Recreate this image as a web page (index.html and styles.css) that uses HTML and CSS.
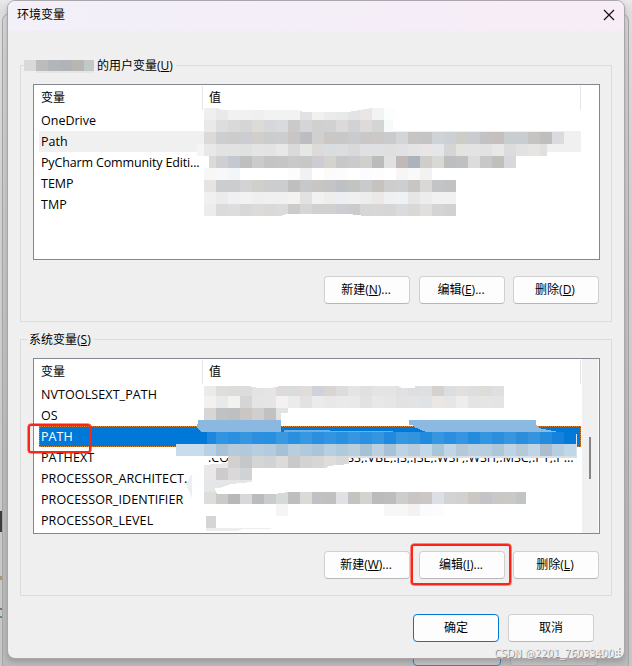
FILE: index.html
```
<!DOCTYPE html>
<html lang="zh-CN">
<head>
<meta charset="utf-8">
<title>环境变量</title>
<link rel="stylesheet" href="styles.css">
</head>
<body>
<div class="back-window"><span class="back-btn back-ok"></span><span class="back-btn back-cancel"></span></div>
<i class="sliver dark"></i><i class="sliver gold"></i><i class="sliver line"></i><i class="sliver blue"></i>
<main class="dialog">
  <header class="titlebar"><span>环境变量</span>
    <svg class="close" width="12" height="12" viewBox="0 0 12 12"><path d="M1 1 11 11M11 1 1 11" stroke="#161018" stroke-width="1.2" fill="none"/></svg>
  </header>
  <section class="group user">
    <h2 class="legend"><svg class="name-mask" width="70" height="14" viewBox="0 0 70 14"><path fill="#d9d9d9" d="M0 1h12v11H0z"/><path fill="#bcbcbd" d="M12 1h12v11H12z"/><path fill="#b3b6b8" d="M24 1h12v11H24z"/><path fill="#b2b3b9" d="M36 1h12v11H36z"/><path fill="#b9b5b3" d="M48 1h12v11H48z"/><path fill="#c2c7c8" d="M60 1h10v11H60z"/><path fill="#e6e6e6" d="M12 12h58v2H12z"/></svg><span>的用户变量(<u>U</u>)</span></h2>
    <div class="list">
      <div class="head"><span>变量</span><span>值</span></div>
      <div class="row"><span>OneDrive</span></div>
      <div class="row current"><span>Path</span></div>
      <div class="row"><span class="tight">PyCharm Community Editi...</span></div>
      <div class="row"><span>TEMP</span></div>
      <div class="row"><span>TMP</span></div>
    </div>
    <div class="buttons"><button>新建(<u>N</u>)...</button><button>编辑(<u>E</u>)...</button><button>删除(<u>D</u>)</button></div>
  </section>
  <section class="group system">
    <h2 class="legend"><span>系统变量(<u>S</u>)</span></h2>
    <div class="list">
      <div class="head"><span>变量</span><span>值</span></div>
      <div class="row"><span>NVTOOLSEXT_PATH</span></div>
      <div class="row"><span>OS</span></div>
      <div class="row selected"><span>PATH</span></div>
      <div class="row"><span>PATHEXT</span><span class="value">.COM;.EXE;.BAT;.CMD;.VBS;.VBE;.JS;.JSE;.WSF;.WSH;.MSC;.PY;.P...</span></div>
      <div class="row"><span>PROCESSOR_ARCHITECT...</span></div>
      <div class="row"><span>PROCESSOR_IDENTIFIER</span></div>
      <div class="row"><span>PROCESSOR_LEVEL</span></div>
      <div class="scroll"><i></i></div>
    </div>
    <div class="buttons"><button>新建(<u>W</u>)...</button><button>编辑(<u>I</u>)...</button><button>删除(<u>L</u>)</button></div>
  </section>
  <footer class="actions"><button class="primary">确定</button><button>取消</button></footer>
</main>
<svg id="mosaic" class="overlay" width="632" height="666" viewBox="0 0 632 666" shape-rendering="crispEdges"></svg>
<div class="mark mark-path"></div>
<div class="mark mark-edit"></div>
<div class="watermark">CSDN @2201_76033400</div>
<svg class="grip" width="8" height="8" viewBox="0 0 8 8" fill="#bcbcbc"><path d="M5 0h2v2H5zM2 3h2v2H2zM5 3h2v2H5zM0 6h1v2H0zM2 6h2v2H2zM5 6h2v2H5z"/></svg>
<script src="mosaic.js"></script>
</body>
</html>
```
FILE: styles.css
```
* { box-sizing: border-box; }
body {
  margin: 0; width: 632px; height: 666px; overflow: hidden; position: relative;
  background: linear-gradient(#e9e9e9 0, #dcdcdc 12px, #d0d0d0 200px, #c6c6c6 100%);
  font: 12px/16px "Open Sans", "Noto Sans CJK SC", sans-serif; color: #000;
}
.back-window {
  position: absolute; left: 2px; top: 13px; width: 627px; height: 670px;
  border: 1px solid #a4a4a4; border-radius: 8px;
  background: linear-gradient(#d9d5dc 0, #d0d0d0 40px, #bcbcbc 450px, #b9b9b9 100%);
}
.back-btn { position: absolute; top: 615px; height: 37px; width: 88px; border: 1px solid #aaa; border-radius: 4px; background: #c2c2c2; }
.back-ok { left: 410px; border-color: #3c83b8; }
.back-cancel { left: 507px; }
.sliver { position: absolute; left: 0; width: 2px; }
.dark { top: 511px; height: 21px; background: #3b3b3d; }
.gold { top: 576px; height: 4px; background: #ac9675; }
.line { top: 608px; height: 2px; background: #777; }
.blue { top: 616px; height: 2px; background: #548da8; }
.dialog {
  position: relative; margin-left: 7px; width: 618px; height: 659px;
  display: flex; flex-direction: column;
  background: #efefef; border: 1px solid #a8a6a9; border-radius: 8px; overflow: hidden;
  box-shadow: 0 3px 5px rgba(0,0,0,.16);
}
.titlebar {
  flex: none; height: 30px; padding: 0 9px 2px; display: flex; align-items: center; justify-content: space-between;
  background: linear-gradient(90deg, #f2f0f8, #f4eef8 50%, #f8edf6);
}
.group { flex: none; margin-left: 12px; width: 592px; border: 1px solid #dcdcdc; padding: 0 12px; }
.user { margin-top: 34px; height: 257px; }
.system { margin-top: 17px; height: 257px; }
.legend {
  margin: -9px 0 0 -9px; width: fit-content; height: 17px; padding: 0 3px 0 0; display: flex; align-items: center; gap: 3px;
  background: #efefef; font-size: 12px; font-weight: 400; line-height: 17px;
}
.system .legend { margin-left: -6px; padding-left: 2px; }
.list { position: relative; margin-top: 10px; height: 176px; width: 567px; border: 1px solid #828790; background: #fff; overflow: hidden; padding-left: 5px; }
.head { height: 25px; padding: 1px 0 0 0; display: grid; grid-template-columns: 164px 378px; }
.head span { padding-left: 2px; line-height: 24px; border-right: 1px solid #e5e5e5; height: 24px; }
.head span + span { padding-left: 6px; }
.row { height: 21px; width: 542px; display: grid; grid-template-columns: 163px 377px; line-height: 22px; white-space: nowrap; font-size: 12.5px; padding-left: 2px; }
.user .row { position: static; }
.system .row { letter-spacing: .1px; }
.row .tight { letter-spacing: -.15px; }
.row .value { padding-left: 4px; letter-spacing: 0; }
.current { background: #f0f0f0; }
.selected { background: #0078d7; color: #fff; outline: 1px dotted #d98332; outline-offset: -1px; }
.scroll { position: absolute; right: 1px; top: 0; width: 16px; height: 174px; background: #f0f0f0; padding: 78px 0 0 7px; }
.scroll i { display: block; width: 2px; height: 42px; background: #858585; }
.buttons { display: flex; justify-content: flex-end; gap: 8px; margin-top: 16px; }
.system .buttons { margin-top: 17px; }
.buttons button:first-child { margin-right: 1px; }
button {
  width: 86px; height: 28px; padding: 0; border: 1px solid #d0d0d0; border-bottom-color: #b8b8b8; border-radius: 4px;
  background: #fdfdfd; color: #000; font: inherit;
}
.buttons button { padding-right: 2px; }
u { text-underline-offset: 1px; }
.actions { display: flex; justify-content: flex-end; gap: 9px; margin: 18px 30px 0 0; }
.primary { border-color: #0078d4; }
.overlay { position: absolute; left: 0; top: 0; }
.mark { position: absolute; border: 2.5px solid #fb2517; border-radius: 3px; }
.mark-path { left: 28px; top: 424px; width: 63px; height: 29px; box-shadow: 0 0 0 .5px #fb2517; }
.mark-edit { left: 411px; top: 544px; width: 100px; height: 41px; box-shadow: 0 0 0 .5px #fb2517; }
.watermark { position: absolute; left: 494px; top: 646px; font: 10px/16px "DejaVu Sans", sans-serif; letter-spacing: -.15px; color: #e9e9e9; text-shadow: 1px 1px 0 #909090; white-space: nowrap; }
.grip { position: absolute; left: 614px; top: 648px; }
```
FILE: mosaic.js
```
const svg = document.getElementById('mosaic');
const NS = 'http://www.w3.org/2000/svg';
function shape(d, fill) {
  const p = document.createElementNS(NS, 'path');
  p.setAttribute('d', d);
  p.setAttribute('fill', fill);
  svg.appendChild(p);
}
// Each strip: first x, top, bottom, right limit, colours of 12px cells ("-" leaves a gap).
function strip(x, top, bottom, limit, colours) {
  colours.split(' ').forEach((c, i) => {
    const a = Math.max(x, 204 + 12 * (i + Math.floor((x - 204) / 12)));
    const b = Math.min(limit, 216 + 12 * (i + Math.floor((x - 204) / 12)));
    if (c !== '-' && b > a) shape(`M${a} ${top}H${b}V${bottom}H${a}z`, '#' + (c.length === 2 ? c + c + c : c));
  });
}
strip(204, 108, 120, 396, 'ef e9 f1 f1 eef0f0 f2 f2 f2 e2 f1 eb e8e9e9 e3 e9e6e8 f2f4f4 fcfefe');
strip(204, 120, 132, 393, 'e9 dd d9 d5 dddbd6 d6d7da d9dadc cccac9 d4d5d8 d2d0cf cfd1d3 dcd9d8 d1d2d6 dddad9 d3d5d5 f7fafa');
shape('M222 108H372V108L348 112H304L297 110H222L216 108z', '#fff');
shape('M197 144H204V156H197z', '#f5f5f5');
strip(204, 132, 144, 564, 'dbdad9 cdced1 cc cccdd0 d1cfcc cc cccdd0 c8c6c4 bbbdc0 d0 cac7c5 c8 cacbcd c8 cbc8c7 cb d3d5d8 c7c4c2 c4 cfd3d5 ccd0d2 cdcdc8 cacbcf c2c2c4 c5c0bd c8cdcf c9ccd0 c5c4c1 be d9dbdf');
strip(204, 144, 156, 547, 'e8 e2 e0e3e1 dfe1e1 e4 e3 e8 da e5e7e5 dddbda dadde0 dcdddf d9 dfe0e4 dfe0e2 e0dfdf e0e1e4 e4 e8e5e4 e4e7e9 d5 e3e3e0 e3 e2 e8 dc e2 e7e5e3 df');
strip(209, 156, 168, 516, 'dbdad5 cecfd0 c4c8d0 bfbfbd cb c4 c5 c9 c9c7c5 cdccd2 d4d3ce c8 cbcbce d0cfcc bb e1 c1b9b5 adb3bc cfcdcc d8d8d4 bcbebf bfc0c2 dc c8 c0c0bb d7d7de');
strip(204, 168, 180, 432, 'f7 f8 f3f6f9 ff ff ff ff fc f1 ff fdfbfa fdfcfa ff fbfcff fd ff f6 f9 f2');
strip(204, 180, 192, 456, 'e5e4e2 cccdcf cccdcf d2d3d5 d1cfcc cdcdce cccdcf c0bfbd c7c8c9 c7c6c3 c2c4c6 bec1c4 c3c3c0 c9cacc c5c2bf cd ccced2 c8c6c5 d9d8d6 c3c4c6 c2');
strip(204, 192, 204, 456, 'f0 eb f0f0f2 f2 eef0ef f0 f0 f4f2f0 e2 f2 eeeeec eceef1 f0 ebeeec ebe8e6 eef0f2 eff2f4 e6 ecedec f1 f1');
strip(204, 204, 216, 456, 'ec db dcdddc d8 dddad8 d9 dadbdd cecac7 d5d6d8 d2d0cd cfd0d2 cccdd2 cccbca d6 d7 d6 dadbdf d9d8d6 e0dfdd d2d4d6 d1');
shape('M280 216L286 214H345L361 215V216z', '#fff');

strip(204, 386, 396, 504, 'ebebea dfdedb dcdddb dadddb e3 e5 dedad9 d9dcda e0dcd9 cfd3d9 d8d4d2 dcdcda e2e4e6 e0 e4 e4e4e2 e1 dddee2 dddfe0 d4d2ce dcdddf e1e0de dddee0 dcdcd9 dedfe0');
shape('M248 386H281L270 388H259zM398 386H415V388H402z', '#fff');
strip(204, 396, 408, 504, 'f1 e8e9eb f2f2ef d5 e4 e5 f3f1f1 eb e4e2e0 eaeceb e8 e9ebea eae8e8 e2 e8 e6 e2 e3 e0e3e6 ebe7e5 e4e6e8 ed e4e4e2 e5 e4e4e6');
strip(204, 408, 420, 276, 'd8d6d4 c0c1c3 bebfc1 c9c6c4 cfcfd0 c3c1c0');
shape('M276 408H288V413H281V420H276z', '#e0e3e4');
shape('M198 420H281V432H201L197 428z', '#8ab8e1');
shape('M284 430H330V431H393V432H284z', '#6faee2');
shape('M409 420H536V425L539 428L558 432H426L414 427L413 425H409z', '#8bb9e2');
strip(207, 432, 444, 576, '1c87dc 3094e2 2b90df 3697e0 2c90df 298fdf 3898e0 2b8fe0 3697e2 2b8edf 3395e1 2b8fe0 3696e1 2b90df 3495e1 218ade 3796e0 3294df 228bdd 3796e0 2b8edf 3695e2 248cdf 3495e0 2c8fde 3896df 2a8edd 3594e0 258bdd 1682dc 0479d7');
shape('M176 444H204V456H176z', '#c8dcec');
strip(204, 444, 456, 577, 'b8d1e4 a8c3d6 b5cbdc b0c9dc b8cddd b3cbdc a4c1d5 b8cedf b1cadb a9c5da b7cfdf b0cadc b9cfde a6c1d4 bcd0e0 a7c2d6 bdd2e2 b6ccdc c2d8e9 a9c6d9 c0d5e5 b4c9d8 bad0df b8cddd adc7d8 bfd3e4 b5cad9 bfd5e5 acbdcf b6cee0 c0d7e8');
shape('M576 434H577V456H576z', '#d6e4ef');
shape('M204 456H228V458H204zM204 463H252V480H204zM252 456H349V463H577V490H252z', '#fff');
// The lower halves of the value's letters stay visible below the strip.
shape('M349 456H577V458H349z', '#dcdfe2');
strip(228, 456, 468, 349, 'd3d0ce c6c7c8 d5 d1d2d5 dcdbd9 cac9c8 d3 d8d6d4 dedddc d8 dfdddc');
shape('M349 464L328 466L326 468H349z', '#fff');
shape('M204 465L228 463V468H204z', '#e8e8e8');
strip(204, 468, 480, 252, 'eae7e7 cdcbcc dad8d9 cfd3d6');
shape('M204 480H252V482L231 484L220 488H215L218 494H204z', '#e5e6e8');
strip(204, 492, 504, 526, 'dddddb ccc9c9 b7b8b9 d6d8d9 bbbabc c9cccc d7d9d8 bcbec0 dcdad6 c0c1c4 c2bfbf dfe1e5 c3c4c2 d5d3ce bbbbbc bcbdbf cdcecb c8c5c4 cac7c5 dce0e6 d3 d1 cbc8c4 c2c4c8 cac8c7 cac9c6 c0c4c7 ed');
shape('M215 488L217 494H275L288 492V484H231L220 488z', '#fff');
shape('M276 504H288V516H276z', '#f5f5f5');
strip(384, 504, 516, 444, 'f7 f7 f3f2f1 fafbfe fc');
shape('M206 516H216V528H206z', '#d5d5d6');
shape('M206 528H271V529H242L238 531H206z', '#ededed');
shape('M187 470H204V488H187z', '#fdfeff');
shape('M186 484L192 474V498z', '#eeeef0');
```
